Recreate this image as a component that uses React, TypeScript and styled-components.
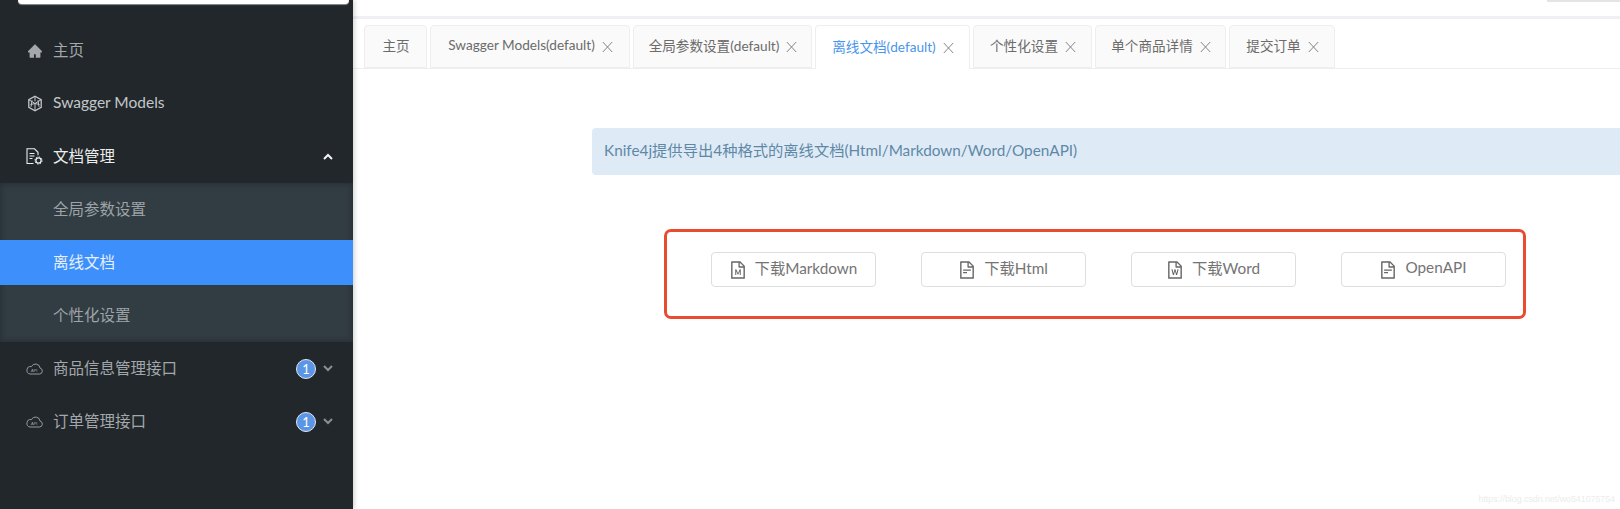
import styled, {createGlobalStyle} from "styled-components";
import {AiFillHome, AiOutlineFileMarkdown, AiOutlineFileText, AiOutlineFileWord} from "react-icons/ai";

const FONT = `Lato, "Noto Sans CJK SC", "Noto Sans", sans-serif`;

const GlobalStyle = createGlobalStyle`
    html, body {
        margin: 0;
        padding: 0;
        background: #fff;
    }

    body {
        font-family: ${FONT};
    }
`;

const Page = styled.div`
    position: relative;
    display: flex;
    width: 1620px;
    height: 509px;
    overflow: hidden;
`;

const Sidebar = styled.aside`
    flex: 0 0 353px;
    background: #21272b;
    box-shadow: 2px 0 4px rgba(0, 0, 0, 0.15);
    z-index: 1;
`;

const SearchStub = styled.div`
    width: 331px;
    height: 4px;
    margin-left: 18px;
    background: #fff;
    border-radius: 0 0 4px 4px;
    box-shadow: 0 1px 1px #8b8f92;
`;

const Menu = styled.nav`
    margin-top: 20px;
`;

const MenuRow = styled.div<{$tone: string}>`
    display: flex;
    align-items: center;
    height: 53px;
    padding: 0 20px 0 26px;
    color: ${p => p.$tone};
    font-size: 15.5px;
`;

const MenuIcon = styled.span`
    display: flex;
    justify-content: center;
    width: 17px;
    margin-right: 10px;
    font-size: 16px;
`;

const MenuLabel = styled.span`
    flex: 1;
    padding-bottom: 3px;
`;

const SubMenu = styled.div`
    display: flex;
    flex-direction: column;
    gap: 8px;
    padding: 4px 0;
    background: #323c43;
    box-shadow: inset 0 0 6px rgba(20, 25, 28, 0.45);
`;

const SubRow = styled.div<{$active?: boolean}>`
    display: flex;
    align-items: center;
    height: 45px;
    padding: 0 0 3px 53px;
    box-sizing: border-box;
    font-size: 15.5px;
    color: ${p => (p.$active ? "#e6f0fd" : "#9da3a7")};
    background: ${p => (p.$active ? "#3d8ffb" : "transparent")};
`;

const Badge = styled.span`
    display: flex;
    align-items: center;
    justify-content: center;
    box-sizing: border-box;
    width: 20px;
    height: 20px;
    margin-right: 7px;
    border: 1px solid #e4e8ee;
    border-radius: 50%;
    background: #5b96e6;
    color: #fff;
    font-size: 13px;
`;

const Main = styled.main`
    flex: 1;
    min-width: 0;
`;

const TopBar = styled.div`
    display: flex;
    justify-content: flex-end;
    height: 16px;
    border-bottom: 3px solid #f0f0f4;
`;

const TopBarEdge = styled.div`
    width: 73px;
    height: 2px;
    background: #e4e4e4;
`;

const TabBar = styled.div`
    display: flex;
    gap: 3px;
    height: 43px;
    margin-top: 6px;
    padding-left: 11px;
    border-bottom: 1px solid #eeeeee;
`;

const Tab = styled.div<{$active?: boolean; $width: number}>`
    display: flex;
    align-items: center;
    justify-content: center;
    gap: 7px;
    box-sizing: border-box;
    width: ${p => p.$width}px;
    height: ${p => (p.$active ? "44px" : "43px")};
    padding: 0 0 3px 1px;
    border: 1px solid #eeeeee;
    border-bottom: ${p => (p.$active ? "none" : "1px solid #eeeeee")};
    border-radius: 4px 4px 0 0;
    background: ${p => (p.$active ? "#fff" : "#fafafa")};
    color: ${p => (p.$active ? "#4a95ec" : "#6b6b6b")};
    font-size: 13.6px;
    white-space: nowrap;
`;

const Content = styled.div`
    padding: 59px 0 0 239px;
`;

const Notice = styled.div`
    display: flex;
    align-items: center;
    box-sizing: border-box;
    height: 47px;
    padding: 0 0 5px 12px;
    margin-right: -10px;
    border-radius: 4px;
    background: #deebf6;
    color: #5f88a6;
    font-size: 15.3px;
`;

const ExportBox = styled.div`
    display: flex;
    gap: 45px;
    box-sizing: border-box;
    width: 862px;
    height: 90px;
    margin: 54px 0 0 72px;
    padding: 20px 0 0 44px;
    border: 3px solid #ea4a30;
    border-radius: 7px;
`;

const ExportButton = styled.button`
    display: flex;
    align-items: center;
    justify-content: center;
    gap: 7px;
    box-sizing: border-box;
    width: 165px;
    height: 35px;
    padding: 0 2px 5px 0;
    border: 1px solid #dedede;
    border-radius: 4px;
    background: #fff;
    color: #747474;
    font-family: ${FONT};
    font-size: 15.3px;

    svg {
        font-size: 20px;
        color: #666;
        margin-top: 5px;
    }
`;

const Watermark = styled.span`
    position: absolute;
    right: 5px;
    bottom: 5px;
    color: #ececec;
    font-family: "Liberation Sans", sans-serif;
    font-size: 8.8px;
`;

const SwaggerIcon = () => (
    <svg width="16" height="17" viewBox="0 0 16 17" fill="none" stroke="currentColor" strokeWidth="1">
        <path d="M8 1.2l6.2 3.5v7.6L8 15.8l-6.2-3.5V4.7z" strokeWidth="1.3"/>
        <path d="M8 1.2v5.2M1.8 4.7L8 8.5l6.2-3.8M8 8.5v7.3M3.5 9.5l4.5-1 4.5 1M5 5.2L4 11.8M11 5.2l1 6.6"/>
    </svg>
);

const DocSettingIcon = () => (
    <svg width="17" height="17" viewBox="0 0 17 17" fill="none" stroke="currentColor" strokeWidth="1.1">
        <path d="M7.5 15.5H1V.8h7.5L12 4.3v3"/>
        <path d="M3.5 5.5h5M3.5 8h5M3.5 10.5h3"/>
        <circle cx="12.5" cy="12.5" r="2.6" strokeWidth="1.3"/>
        <circle cx="12.5" cy="12.5" r="3.6" strokeWidth="1" strokeDasharray="1.4 1.4"/>
    </svg>
);

const ApiCloudIcon = () => (
    <svg width="17" height="13" viewBox="0 0 17 13" fill="none" stroke="currentColor" strokeWidth="0.9">
        <path d="M4 12h9.5a3 3 0 0 0 .6-5.9A4.6 4.6 0 0 0 5.4 4.6 3.7 3.7 0 0 0 4 12z"/>
        <text x="5" y="9.5" fontSize="4" stroke="none" fill="currentColor" fontFamily="Liberation Sans, sans-serif">API</text>
    </svg>
);

const CloseIcon = () => (
    <svg width="11" height="12" viewBox="0 0 11 12" fill="none" stroke="#777" strokeWidth="0.9" style={{marginTop: 3, flex: "none"}}>
        <path d="M.8 1l9.4 10M10.2 1L.8 11"/>
    </svg>
);

const Chevron = ({up, color}: { up?: boolean; color: string }) => (
    <svg width="10" height="7" viewBox="0 0 10 7" fill="none" stroke={color} strokeWidth="2">
        <path d={up ? "M1 6l4-4 4 4" : "M1 1l4 4 4-4"}/>
    </svg>
);

const tabs = [
    {label: "主页", width: 63, closable: false},
    {label: "Swagger Models(default)", width: 200, closable: true},
    {label: "全局参数设置(default)", width: 179, closable: true},
    {label: "离线文档(default)", width: 155, closable: true, active: true},
    {label: "个性化设置", width: 119, closable: true},
    {label: "单个商品详情", width: 131, closable: true},
    {label: "提交订单", width: 106, closable: true},
];

const exportsList = [
    {label: "下载Markdown", icon: <AiOutlineFileMarkdown/>},
    {label: "下载Html", icon: <AiOutlineFileText/>},
    {label: "下载Word", icon: <AiOutlineFileWord/>},
    {label: "OpenAPI", icon: <AiOutlineFileText/>},
];

export default function App() {
    return (
        <>
            <GlobalStyle/>
            <Page>
                <Sidebar>
                    <SearchStub/>
                    <Menu>
                        <MenuRow $tone="#a4a8ab">
                            <MenuIcon><AiFillHome/></MenuIcon>
                            <MenuLabel>主页</MenuLabel>
                        </MenuRow>
                        <MenuRow $tone="#c4c7c9">
                            <MenuIcon><SwaggerIcon/></MenuIcon>
                            <MenuLabel>Swagger Models</MenuLabel>
                        </MenuRow>
                        <MenuRow $tone="#eceded">
                            <MenuIcon><DocSettingIcon/></MenuIcon>
                            <MenuLabel>文档管理</MenuLabel>
                            <Chevron up color="#f4f4f4"/>
                        </MenuRow>
                        <SubMenu>
                            <SubRow>全局参数设置</SubRow>
                            <SubRow $active>离线文档</SubRow>
                            <SubRow>个性化设置</SubRow>
                        </SubMenu>
                        <MenuRow $tone="#a4a8ab">
                            <MenuIcon><ApiCloudIcon/></MenuIcon>
                            <MenuLabel>商品信息管理接口</MenuLabel>
                            <Badge>1</Badge>
                            <Chevron color="#8b8f92"/>
                        </MenuRow>
                        <MenuRow $tone="#a4a8ab">
                            <MenuIcon><ApiCloudIcon/></MenuIcon>
                            <MenuLabel>订单管理接口</MenuLabel>
                            <Badge>1</Badge>
                            <Chevron color="#8b8f92"/>
                        </MenuRow>
                    </Menu>
                </Sidebar>
                <Main>
                    <TopBar><TopBarEdge/></TopBar>
                    <TabBar>
                        {tabs.map(tab => (
                            <Tab key={tab.label} $active={tab.active} $width={tab.width}>
                                {tab.label}
                                {tab.closable && <CloseIcon/>}
                            </Tab>
                        ))}
                    </TabBar>
                    <Content>
                        <Notice>Knife4j提供导出4种格式的离线文档(Html/Markdown/Word/OpenAPI)</Notice>
                        <ExportBox>
                            {exportsList.map(item => (
                                <ExportButton key={item.label}>
                                    {item.icon}
                                    {item.label}
                                </ExportButton>
                            ))}
                        </ExportBox>
                    </Content>
                </Main>
                <Watermark>https://blog.csdn.net/wo541075754</Watermark>
            </Page>
        </>
    );
}
